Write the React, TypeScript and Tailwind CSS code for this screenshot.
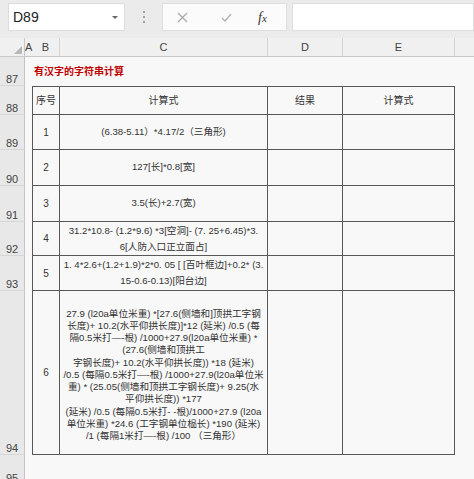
import React from 'react';

const font = { fontFamily: '"Liberation Sans", "Noto Sans CJK SC", sans-serif' };

const rows: { h: string; label: string; no?: string; lines?: string[]; head?: boolean; lead?: string }[] = [
  { h: 'h-[29px]', label: '88', head: true },
  { h: 'h-[35px]', label: '89', no: '1', lines: ['(6.38-5.11）*4.17/2（三角形)'] },
  { h: 'h-[36px]', label: '90', no: '2', lines: ['127[长]*0.8[宽]'] },
  { h: 'h-[36px]', label: '91', no: '3', lines: ['3.5(长)+2.7(宽)'] },
  {
    h: 'h-[34px]',
    label: '92',
    no: '4',
    lead: 'leading-[16px]',
    lines: ['31.2*10.8- (1.2*9.6) *3[空洞]- (7. 25+6.45)*3.', '6[人防入口正立面占]'],
  },
  {
    h: 'h-[35px]',
    label: '93',
    no: '5',
    lead: 'leading-[16px]',
    lines: ['1. 4*2.6+(1.2+1.9)*2*0. 05 [ [百叶框边]+0.2* (3.', '15-0.6-0.13)[阳台边]'],
  },
  {
    h: 'h-[164px]',
    label: '94',
    no: '6',
    lead: 'leading-[12.2px]',
    lines: [
      '27.9 (l20a单位米重) *[27.6(侧墙和]顶拱工字钢',
      '长度)+ 10.2(水平仰拱长度)]*12 (延米) /0.5 (每',
      '隔0.5米打—-根) /1000+27.9(l20a单位米重) *',
      '(27.6(侧墙和顶拱工',
      '字钢长度)+ 10.2(水平仰拱长度)) *18 (延米)',
      '/0.5 (每隔0.5米打—-根) /1000+27.9(l20a单位米',
      '重) * (25.05(侧墙和顶拱工字钢长度)+ 9.25(水',
      '平仰拱长度)) *177',
      '(延米) /0.5 (每隔0.5米打- -根)/1000+27.9 (l20a',
      '单位米重) *24.6 (工字钢单位榀长) *190 (延米)',
      '/1 (每隔1米打—-根) /100 （三角形）',
    ],
  },
];

const RowHead = ({ label, h }: { label: string; h: string }) => (
  <div className={`${h} w-[25px] shrink-0 bg-[#e8e8e8] border-r border-b border-r-[#c4c4c4] border-b-[#d6d6d6] flex items-end justify-center text-[11px] leading-[12px] text-[#444]`}>
    {label}
  </div>
);

export default function App() {
  return (
    <div className="w-[474px] h-[479px] overflow-hidden bg-[#ebebeb] flex flex-col" style={font}>
      {/* formula bar */}
      <div className="h-[38px] shrink-0 flex items-start pt-[3px] pl-[8px] gap-0">
        <div className="w-[117px] h-[28px] bg-white border border-[#dcdcdc] flex items-center justify-between pl-[4px] pr-[6px]">
          <span className="text-[14px] text-[#222]">D89</span>
          <span className="w-0 h-0 border-l-[3px] border-r-[3px] border-t-[3px] border-l-transparent border-r-transparent border-t-[#666]" />
        </div>
        <div className="w-[37px] h-[28px] flex flex-col items-center justify-center gap-[3px]">
          <span className="w-[2px] h-[2px] bg-[#a0a0a0]" />
          <span className="w-[2px] h-[2px] bg-[#a0a0a0]" />
          <span className="w-[2px] h-[2px] bg-[#a0a0a0]" />
        </div>
        <div className="w-[125px] h-[28px] bg-[#fbfbfb] border border-[#dedede] flex items-center">
          <svg className="ml-[14px]" width="11" height="11" viewBox="0 0 11 11">
            <path d="M1 1L10 10M10 1L1 10" stroke="#a8a8a8" strokeWidth="1.2" fill="none" />
          </svg>
          <svg className="ml-[33px]" width="11" height="9" viewBox="0 0 11 9">
            <path d="M1 5L4 8L10 1" stroke="#b0b0b0" strokeWidth="1.3" fill="none" />
          </svg>
          <span className="ml-[26px] text-[14px] italic text-[#333]" style={{ fontFamily: '"Liberation Serif", serif' }}>
            f<span className="text-[11px]">x</span>
          </span>
        </div>
        <div className="ml-[5px] flex-1 h-[28px] bg-white border border-[#dedede]" />
      </div>

      {/* column headers */}
      <div className="h-[19px] shrink-0 flex bg-[#f0f0f0] border-b border-[#c8c8c8] text-[11px] text-[#444]">
        <div className="w-[25px] shrink-0 relative border-r border-[#c8c8c8]">
          <span className="absolute right-[2px] bottom-[2px] w-0 h-0" style={{ borderBottom: '8px solid #b8b8b8', borderLeft: '8px solid transparent' }} />
        </div>
        <div className="w-[7px] shrink-0 flex items-center">A</div>
        <div className="w-[28px] shrink-0 flex items-center justify-center border-r border-[#d4d4d4]">B</div>
        <div className="w-[208px] shrink-0 flex items-center justify-center border-r border-[#d4d4d4]">C</div>
        <div className="w-[75px] shrink-0 flex items-center justify-center border-r border-[#d4d4d4]">D</div>
        <div className="w-[112px] shrink-0 flex items-center justify-center border-r border-[#d4d4d4]">E</div>
        <div className="flex-1" />
      </div>

      {/* row 87 */}
      <div className="flex shrink-0">
        <RowHead label="87" h="h-[29px]" />
        <div className="flex-1 bg-[#f8f8f8] flex items-center pl-[9px] text-[10px] font-bold text-[#c00000]">
          有汉字的字符串计算
        </div>
      </div>

      {rows.map((r, i) => (
        <div key={r.label} className="flex shrink-0">
          <RowHead label={r.label} h={r.h} />
          <div className={`${r.h} flex-1 flex bg-[#f8f8f8] text-[10px] text-[#333]`}>
            <div className="w-[7px] shrink-0" />
            <div className={`w-[28px] shrink-0 flex items-center justify-center border-l border-r border-b border-[#595959] ${i === 0 ? 'border-t' : ''}`}>
              {r.head ? '序号' : r.no}
            </div>
            <div className={`w-[208px] shrink-0 flex flex-col items-center justify-center border-r border-b border-[#595959] ${i === 0 ? 'border-t' : 'text-[9.6px]'} ${r.lead ?? ''} ${r.label === '94' ? 'pt-[5px]' : ''}`}>
              {r.head ? '计算式' : r.lines?.map((l, j) => (
                <div key={j} className="whitespace-nowrap">{l}</div>
              ))}
            </div>
            <div className={`w-[75px] shrink-0 flex items-center justify-center border-r border-b border-[#595959] ${i === 0 ? 'border-t' : ''}`}>
              {r.head ? '结果' : ''}
            </div>
            <div className={`w-[112px] shrink-0 flex items-center justify-center border-r border-b border-[#595959] ${i === 0 ? 'border-t' : ''}`}>
              {r.head ? '计算式' : ''}
            </div>
            <div className="flex-1" />
          </div>
        </div>
      ))}

      {/* row 95 */}
      <div className="flex shrink-0">
        <RowHead label="95" h="h-[30px]" />
        <div className="flex-1 bg-[#f8f8f8]" />
      </div>
    </div>
  );
}
